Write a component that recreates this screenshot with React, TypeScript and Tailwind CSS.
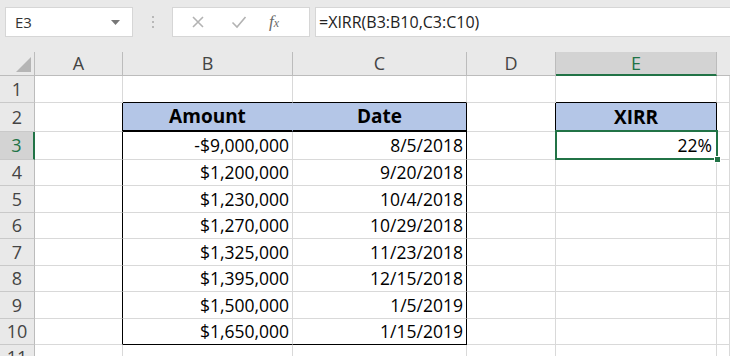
import React from "react";

const COLS = ["A", "B", "C", "D", "E"];
const ROW_H = [27, 29, 28, 26, 27, 26, 27, 26, 27, 26, 26];

const DATA: [string, string][] = [
  ["-$9,000,000", "8/5/2018"],
  ["$1,200,000", "9/20/2018"],
  ["$1,230,000", "10/4/2018"],
  ["$1,270,000", "10/29/2018"],
  ["$1,325,000", "11/23/2018"],
  ["$1,395,000", "12/15/2018"],
  ["$1,500,000", "1/5/2019"],
  ["$1,650,000", "1/15/2019"],
];

const ui = { fontFamily: '"Open Sans", "Noto Sans", sans-serif' };
const cellFont = { fontFamily: '"Open Sans", "Noto Sans", sans-serif' };

function FormulaBar() {
  return (
    <div className="h-[52px] bg-[#e9e9e9] flex items-start pt-[7px]" style={ui}>
      <div className="ml-[5px] w-[128px] h-[30px] bg-white border border-[#d6d6d6] flex items-center justify-between pl-[9px] pr-[12px]">
        <span className="text-[15px] text-[#333]">E3</span>
        <svg width="9" height="5" viewBox="0 0 9 5">
          <path d="M0 0 L9 0 L4.5 5 Z" fill="#777" />
        </svg>
      </div>
      <div className="w-[39px] h-[30px] flex flex-col items-center justify-center gap-[3px]">
        <span className="w-[2px] h-[2px] bg-[#b8b8b8]" />
        <span className="w-[2px] h-[2px] bg-[#b8b8b8]" />
        <span className="w-[2px] h-[2px] bg-[#b8b8b8]" />
      </div>
      <div className="w-[138px] h-[30px] bg-white border border-[#d6d6d6] flex items-center">
        <svg className="ml-[18px]" width="14" height="14" viewBox="0 0 14 14">
          <path d="M2 2 L12 12 M12 2 L2 12" stroke="#b3b3b3" strokeWidth="1.6" fill="none" />
        </svg>
        <svg className="ml-[26px]" width="16" height="14" viewBox="0 0 16 14">
          <path d="M1.5 7.5 L6 12 L14.5 2" stroke="#b3b3b3" strokeWidth="1.6" fill="none" />
        </svg>
        <span
          className="ml-[22px] text-[17px] italic text-[#6a6a6a]"
          style={{ fontFamily: '"Liberation Serif", serif' }}
        >
          f<span className="text-[12px]">x</span>
        </span>
      </div>
      <div className="ml-[5px] flex-1 h-[30px] bg-white border border-[#d6d6d6] border-r-0 flex items-center pl-[3px]">
        <span className="text-[16px] text-[#222]">=XIRR(B3:B10,C3:C10)</span>
      </div>
    </div>
  );
}

type CellProps = {
  children?: React.ReactNode;
  className?: string;
};

function Cell({ children, className = "" }: CellProps) {
  return (
    <div
      className={`relative flex items-center border-r border-b border-[#d9d9d9] text-[17.5px] text-black overflow-visible ${className}`}
      style={cellFont}
    >
      {children}
    </div>
  );
}

export default function App() {
  const colHeader = (c: string) => {
    const sel = c === "E";
    return (
      <div
        key={c}
        className={`flex items-center justify-center text-[18px] border-r border-[#bcbcbc] ${
          sel
            ? "bg-[#d3d3d3] text-[#217346] border-b-2 border-b-[#217346]"
            : "bg-[#e9e9e9] text-[#444] border-b border-b-[#bcbcbc]"
        }`}
        style={ui}
      >
        {c}
      </div>
    );
  };

  const rowHeader = (n: number) => {
    const sel = n === 3;
    return (
      <div
        key={`r${n}`}
        className={`flex items-center justify-center text-[18px] border-b border-[#c9c9c9] ${
          sel
            ? "bg-[#d3d3d3] text-[#217346] border-r-2 border-r-[#217346]"
            : "bg-[#e9e9e9] text-[#444] border-r border-r-[#bcbcbc]"
        }`}
        style={ui}
      >
        {n}
      </div>
    );
  };

  const rows: React.ReactNode[] = [];
  for (let r = 1; r <= 11; r++) {
    rows.push(rowHeader(r));
    const inTable = r >= 2 && r <= 10;
    // A
    rows.push(
      <Cell key={`A${r}`} className={inTable ? "border-r-black" : ""} />
    );
    if (r === 2) {
      rows.push(
        <Cell key="B2" className="bg-[#b4c6e7] border-r-[#b4c6e7] border-b-black border-b-2 justify-center font-bold text-[19px]">
          Amount
        </Cell>
      );
      rows.push(
        <Cell key="C2" className="bg-[#b4c6e7] border-r-black border-b-black border-b-2 justify-center font-bold text-[19px]">
          Date
        </Cell>
      );
    } else if (r >= 3 && r <= 10) {
      const [amt, date] = DATA[r - 3];
      const bottom = r === 10 ? "border-b-black" : "";
      rows.push(
        <Cell key={`B${r}`} className={`justify-end pr-[3px] ${bottom}`}>
          {amt}
        </Cell>
      );
      rows.push(
        <Cell key={`C${r}`} className={`justify-end pr-[3px] border-r-black ${bottom}`}>
          {date}
        </Cell>
      );
    } else {
      const bottom = r === 1 ? "border-b-black" : "";
      rows.push(<Cell key={`B${r}`} className={bottom} />);
      rows.push(<Cell key={`C${r}`} className={bottom} />);
    }
    // D
    rows.push(
      <Cell key={`D${r}`} className={r === 2 || r === 3 ? "border-r-black" : ""} />
    );
    // E
    if (r === 1) {
      rows.push(<Cell key="E1" className="border-b-black" />);
    } else if (r === 2) {
      rows.push(
        <Cell key="E2" className="bg-[#b4c6e7] border-r-black border-b-black justify-center font-bold text-[19px]">
          XIRR
        </Cell>
      );
    } else if (r === 3) {
      rows.push(
        <Cell key="E3" className="z-10 border-r-black border-b-black justify-end pr-[4px]">
          22%
          <div className="absolute -left-px -top-[2px] -right-[2px] -bottom-px border-2 border-[#217346] pointer-events-none" />
          <div className="absolute -right-[5px] -bottom-[4px] w-[7px] h-[7px] bg-[#217346] border border-white" />
        </Cell>
      );
    } else {
      rows.push(<Cell key={`E${r}`} />);
    }
    // F (partial)
    rows.push(<Cell key={`F${r}`} />);
  }

  return (
    <div className="w-[730px] h-[356px] overflow-hidden bg-white">
      <FormulaBar />
      <div
        className="grid h-[304px] overflow-hidden"
        style={{
          gridTemplateColumns: "35px 88px 170px 174px 89px 161px 1fr",
          gridTemplateRows: `24px ${ROW_H.map((h) => `${h}px`).join(" ")}`,
        }}
      >
        <div className="bg-[#e9e9e9] border-r border-b border-[#bcbcbc] flex items-end justify-end pr-[3px] pb-[3px]">
          <svg width="15" height="15" viewBox="0 0 15 15">
            <path d="M15 0 L15 15 L0 15 Z" fill="#b5b5b5" />
          </svg>
        </div>
        {COLS.map(colHeader)}
        <div className="bg-[#e9e9e9] border-b border-[#bcbcbc]" />
        {rows}
      </div>
    </div>
  );
}
